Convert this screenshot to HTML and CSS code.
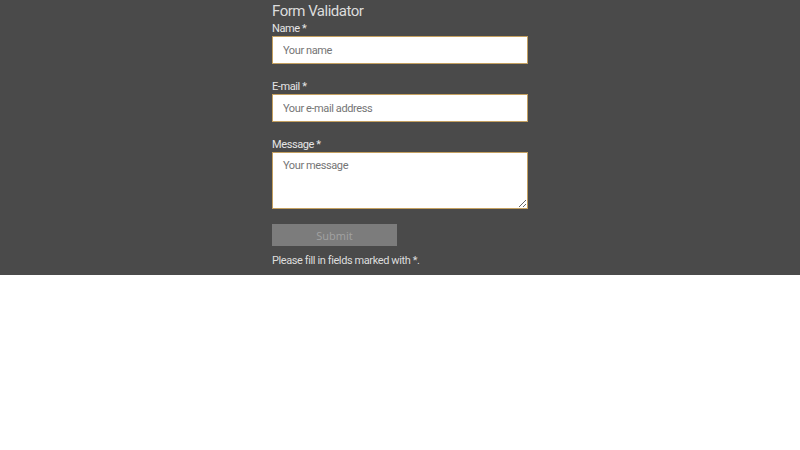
FILE: index.html
```
<!DOCTYPE html>
<html lang="en">
<head>
<meta charset="utf-8">
<title>Form Validator</title>
<link rel="stylesheet" href="styles.css">
</head>
<body>
<div class="page">
  <form class="form">
    <h1 class="title">Form Validator</h1>
    <div class="field">
      <label class="label" for="name">Name *</label>
      <input class="input" id="name" type="text" placeholder="Your name">
    </div>
    <div class="field">
      <label class="label" for="email">E-mail *</label>
      <input class="input" id="email" type="text" placeholder="Your e-mail address">
    </div>
    <div class="field">
      <label class="label" for="msg">Message *</label>
      <textarea class="input textarea" id="msg" placeholder="Your message"></textarea>
    </div>
    <button class="submit" type="button" disabled>Submit</button>
    <p class="note">Please fill in fields marked with *.</p>
  </form>
</div>
</body>
</html>
```
FILE: styles.css
```
html, body {
  margin: 0;
  padding: 0;
  background: #ffffff;
}
.page {
  background: #4a4a4a;
  padding-bottom: 7px;
  font-family: Roboto, "Liberation Sans", sans-serif;
}
.form {
  width: 256px;
  margin: 0 auto;
  display: flex;
  flex-direction: column;
}
.title {
  margin: 0;
  padding-top: 1px;
  font-size: 15px;
  font-weight: 400;
  letter-spacing: -0.5px;
  line-height: 20px;
  color: #dcdcdc;
}
.field {
  display: flex;
  flex-direction: column;
  margin-bottom: 15px;
}
.label {
  padding-top: 1px;
  font-size: 11px;
  letter-spacing: -0.4px;
  line-height: 14px;
  color: #e6e6e6;
}
.input {
  box-sizing: border-box;
  width: 256px;
  height: 28px;
  margin: 0;
  padding: 1px 10px 0;
  border: 1px solid #c4a060;
  background: #ffffff;
  font-family: Roboto, "Liberation Sans", sans-serif;
  font-size: 11px;
  letter-spacing: -0.4px;
  color: #333;
  outline: none;
}
.input::placeholder {
  color: #757575;
}
.textarea {
  height: 57px;
  padding: 6px 10px;
  resize: vertical;
  display: block;
}
.submit {
  width: 125px;
  height: 22px;
  margin: 0;
  padding: 0;
  border: none;
  background: #7c7c7c;
  color: #a2a2a2;
  font-family: "Open Sans", "Liberation Sans", sans-serif;
  font-size: 11px;
  cursor: default;
}
.note {
  margin: 8px 0 0;
  font-size: 11px;
  letter-spacing: -0.4px;
  line-height: 14px;
  color: #dddddd;
}
```
